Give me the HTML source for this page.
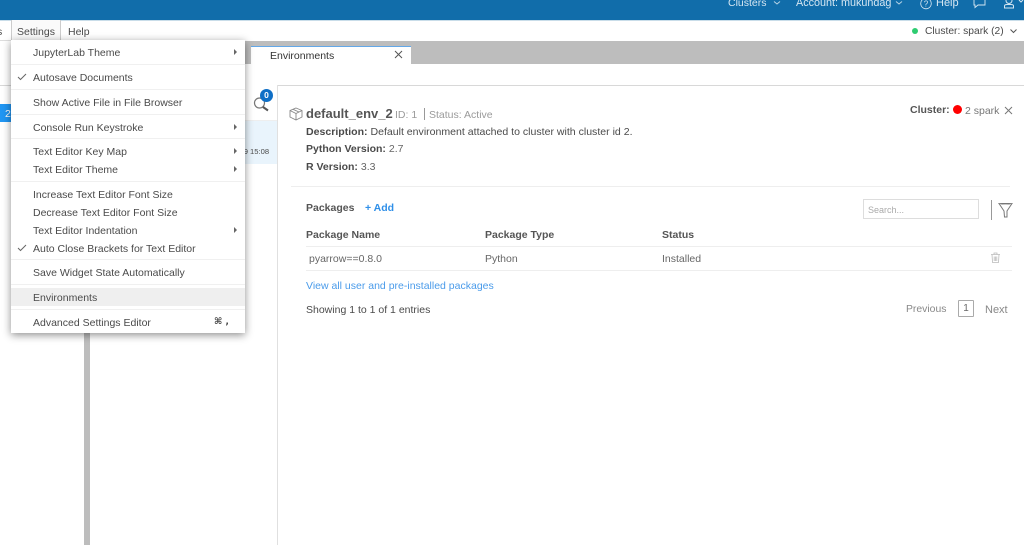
<!DOCTYPE html>
<html><head><meta charset="utf-8"><style>
html,body{margin:0;padding:0;background:#fff}
#p{position:relative;width:1024px;height:545px;overflow:hidden;background:#fff;font-family:"Liberation Sans",sans-serif;color:#4a4a4a;font-size:10.5px;filter:blur(.35px)}
#p div,#p span.a{position:absolute}
.t{position:absolute;white-space:nowrap;line-height:14px;height:14px}
.b{font-weight:bold}
.s{position:absolute;left:0;width:234px;height:1px;background:#f0f0f0}
.r{position:absolute;left:223px;width:0;height:0;border-left:3px solid #666;border-top:3px solid transparent;border-bottom:3px solid transparent}
svg{position:absolute;overflow:visible}
</style></head><body><div id="p">
<div style="left:0;top:0;width:1024px;height:20px;background:#116daa"></div>
<div style="left:0;top:20px;width:1024px;height:1px;background:#c9dde9"></div>
<span class="t" style="left:728px;top:-4px;color:#d5e6f2">Clusters</span>
<svg style="left:773px;top:0" width="8" height="6"><path d="M1 1.5L4 4L7 1.5" fill="none" stroke="#b8d4e6"/></svg>
<span class="t" style="left:796px;top:-4px;color:#d5e6f2;font-size:10.8px">Account: mukundag</span>
<svg style="left:895px;top:0" width="8" height="6"><path d="M1 1.5L4 4L7 1.5" fill="none" stroke="#b8d4e6"/></svg>
<svg style="left:920px;top:-2px" width="12" height="12"><circle cx="6" cy="5.5" r="5.3" fill="none" stroke="#d5e6f2" stroke-width=".8"/><text x="6" y="8.5" font-size="8" text-anchor="middle" fill="#d5e6f2" font-family="Liberation Sans">?</text></svg>
<span class="t" style="left:936px;top:-4px;color:#d5e6f2;font-size:11px">Help</span>
<svg style="left:973px;top:-2px" width="13" height="12"><path d="M1 1H12V7H5L2 9.5V7H1Z" fill="none" stroke="#d5e6f2" stroke-width=".9"/></svg>
<svg style="left:1003px;top:-3px" width="21" height="13"><circle cx="6" cy="3.5" r="3" fill="none" stroke="#d5e6f2"/><path d="M1.5 11V9Q1.5 7.5 4 7.5H8Q10.500 7.500 10.500 9V11Z" fill="none" stroke="#d5e6f2"/><path d="M16 3L18 5L20 3" fill="none" stroke="#d5e6f2"/></svg>

<span class="t" style="left:-3px;top:25px">s</span>
<div style="left:0;top:40px;width:11px;height:1px;background:#ddd"></div>
<div style="left:11px;top:20px;width:50px;height:20px;background:#fafafa;border-left:1px solid #ccc;border-right:1px solid #ccc;box-sizing:border-box"></div>
<span class="t" style="left:17px;top:25px">Settings</span>
<span class="t" style="left:68px;top:25px">Help</span>
<div style="left:912px;top:28px;width:6px;height:6px;border-radius:50%;background:#2ecc71"></div>
<span class="t" style="left:925px;top:25px;font-size:10.25px">Cluster: spark (2)</span>
<svg style="left:1009px;top:28px" width="9" height="6"><path d="M1.500 1.500L4.500 4.500L7.500 1.500" fill="none" stroke="#555"/></svg>

<div style="left:245px;top:41px;width:779px;height:23px;background:#bdbdbd"></div>
<div style="left:251px;top:46px;width:160px;height:19px;background:#fff;border-top:1px solid #64a8e8;box-sizing:border-box"></div>
<span class="t" style="left:270px;top:49px;color:#333">Environments</span>
<svg style="left:394px;top:50px" width="9" height="9"><path d="M1 1L8 8M8 1L1 8" stroke="#555" fill="none"/></svg>
<div style="left:0;top:85px;width:1024px;height:1px;background:#d8d8d8"></div>

<div style="left:0;top:104px;width:11px;height:18px;background:#2196f3"></div>
<span class="t" style="left:5px;top:107px;color:#fff">2</span>
<div style="left:84px;top:85px;width:6px;height:460px;background:#bdbdbd"></div>
<div style="left:90px;top:85px;width:187px;height:460px;background:#fff"></div>
<div style="left:277px;top:85px;width:1px;height:460px;background:#e0e0e0"></div>
<div style="left:245px;top:120px;width:32px;height:1px;background:#eee"></div>
<div style="left:245px;top:121px;width:32px;height:43px;background:#e9f4fc"></div>
<span class="t" style="left:239.5px;top:145px;font-size:7.6px">19 15:08</span>
<svg style="left:253px;top:96px" width="16" height="16"><circle cx="6.500" cy="7" r="5" fill="none" stroke="#777" stroke-width="1.200"/><path d="M10 11L15 14.500" stroke="#555" stroke-width="2"/></svg>
<div style="left:260px;top:89px;width:13px;height:13px;border-radius:50%;background:#0f6fc6;color:#fff;font:bold 8.500px/13px 'Liberation Sans',sans-serif;text-align:center">0</div>

<svg style="left:289px;top:107px" width="14" height="14"><path d="M7 1L13 3.500V10L7 13L1 10V3.500ZM1 3.500L7 6.500L13 3.500M7 6.500V13M4 2.300L10 5" fill="none" stroke="#888" stroke-width=".9"/></svg>
<span class="t b" style="left:306px;top:107px;font-size:13px;color:#555">default_env_2</span>
<span class="t" style="left:395px;top:108px;color:#9a9a9a">ID: 1</span>
<div style="left:424px;top:108px;width:1px;height:12px;background:#999"></div>
<span class="t" style="left:429px;top:108px;color:#9a9a9a">Status: Active</span>
<span class="t" style="left:306px;top:125px;font-size:10.55px"><b>Description:</b> Default environment attached to cluster with cluster id 2.</span>
<span class="t" style="left:306px;top:142px"><b>Python Version:</b> <span style="color:#666">2.7</span></span>
<span class="t" style="left:306px;top:160px"><b>R Version:</b> <span style="color:#666">3.3</span></span>
<span class="t b" style="left:910px;top:103px;color:#555">Cluster:</span>
<div style="left:953px;top:105px;width:9px;height:9px;border-radius:50%;background:#f00"></div>
<span class="t" style="left:965px;top:104px;color:#777">2 spark</span>
<svg style="left:1004px;top:106px" width="9" height="9"><path d="M1 1L8 8M8 1L1 8" stroke="#777" fill="none"/></svg>
<div style="left:291px;top:186px;width:719px;height:1px;background:#eee"></div>

<span class="t b" style="left:306px;top:201px;color:#555">Packages</span>
<span class="t b" style="left:365px;top:201px;color:#2f8fe8">+ Add</span>
<div style="left:863px;top:199px;width:116px;height:20px;border:1px solid #ddd;box-sizing:border-box"></div>
<span class="t" style="left:868px;top:203px;font-size:9px;color:#aaa">Search...</span>
<div style="left:991px;top:200px;width:1px;height:20px;background:#999"></div>
<svg style="left:998px;top:202px" width="15" height="16"><path d="M1 1.500H14L9 9V15H6.500L6 9Z" fill="none" stroke="#777"/><path d="M1 1.500Q7.500 4 14 1.500" fill="none" stroke="#999" stroke-width=".6"/></svg>

<span class="t b" style="left:306px;top:228px;color:#555">Package Name</span>
<span class="t b" style="left:485px;top:228px;color:#555">Package Type</span>
<span class="t b" style="left:662px;top:228px;color:#555">Status</span>
<div style="left:306px;top:246px;width:706px;height:1px;background:#eee"></div>
<span class="t" style="left:309px;top:252px;color:#666">pyarrow==0.8.0</span>
<span class="t" style="left:485px;top:252px;color:#666">Python</span>
<span class="t" style="left:662px;top:252px;color:#666">Installed</span>
<svg style="left:990px;top:252px" width="11" height="12"><path d="M1 2.500H10M4 2.500V1H7V2.500M2 2.500L2.500 10.500H8.500L9 2.500M4.200 4.500V9M5.500 4.500V9M6.800 4.500V9" fill="none" stroke="#bbb" stroke-width=".8"/></svg>
<div style="left:306px;top:270px;width:706px;height:1px;background:#eee"></div>
<span class="t" style="left:306px;top:279px;color:#4a9bea">View all user and pre-installed packages</span>
<span class="t" style="left:306px;top:303px">Showing 1 to 1 of 1 entries</span>
<span class="t" style="left:906px;top:302.500px;color:#888;font-size:10.4px">Previous</span>
<div style="left:958px;top:300px;width:16px;height:17px;border:1px solid #aaa;box-sizing:border-box;border-radius:1px;color:#666;text-align:center;line-height:16px;font-size:10px">1</div>
<span class="t" style="left:985px;top:302.500px;color:#888;font-size:11px">Next</span>

<div style="left:11px;top:40px;width:234px;height:293px;background:#fff;box-shadow:0 2px 8px rgba(0,0,0,.45)">
<div class="s" style="top:24px"></div><div class="s" style="top:49px"></div><div class="s" style="top:74px"></div><div class="s" style="top:98px"></div><div class="s" style="top:141px"></div><div class="s" style="top:219px"></div><div class="s" style="top:244px"></div><div class="s" style="top:269px"></div>
<div style="left:0;top:248px;width:234px;height:18px;background:#efefef"></div>
<span class="t" style="left:22px;top:6px">JupyterLab Theme</span><div class="r" style="top:9px"></div>
<span class="t" style="left:22px;top:31px">Autosave Documents</span>
<svg style="left:6px;top:33px" width="10" height="8"><path d="M1 4L3.500 6.500L9 1" fill="none" stroke="#666"/></svg>
<span class="t" style="left:22px;top:56px">Show Active File in File Browser</span>
<span class="t" style="left:22px;top:81px">Console Run Keystroke</span><div class="r" style="top:84px"></div>
<span class="t" style="left:22px;top:105px">Text Editor Key Map</span><div class="r" style="top:108px"></div>
<span class="t" style="left:22px;top:123px">Text Editor Theme</span><div class="r" style="top:126px"></div>
<span class="t" style="left:22px;top:148px">Increase Text Editor Font Size</span>
<span class="t" style="left:22px;top:166px">Decrease Text Editor Font Size</span>
<span class="t" style="left:22px;top:184px">Text Editor Indentation</span><div class="r" style="top:187px"></div>
<span class="t" style="left:22px;top:202px">Auto Close Brackets for Text Editor</span>
<svg style="left:6px;top:204px" width="10" height="8"><path d="M1 4L3.500 6.500L9 1" fill="none" stroke="#666"/></svg>
<span class="t" style="left:22px;top:226px">Save Widget State Automatically</span>
<span class="t" style="left:22px;top:251px">Environments</span>
<span class="t" style="left:22px;top:276px">Advanced Settings Editor</span>
<span class="t b" style="left:203px;top:275px;font-family:'DejaVu Sans',sans-serif;font-size:9px">⌘ ,</span>
</div>
</div></body></html>
